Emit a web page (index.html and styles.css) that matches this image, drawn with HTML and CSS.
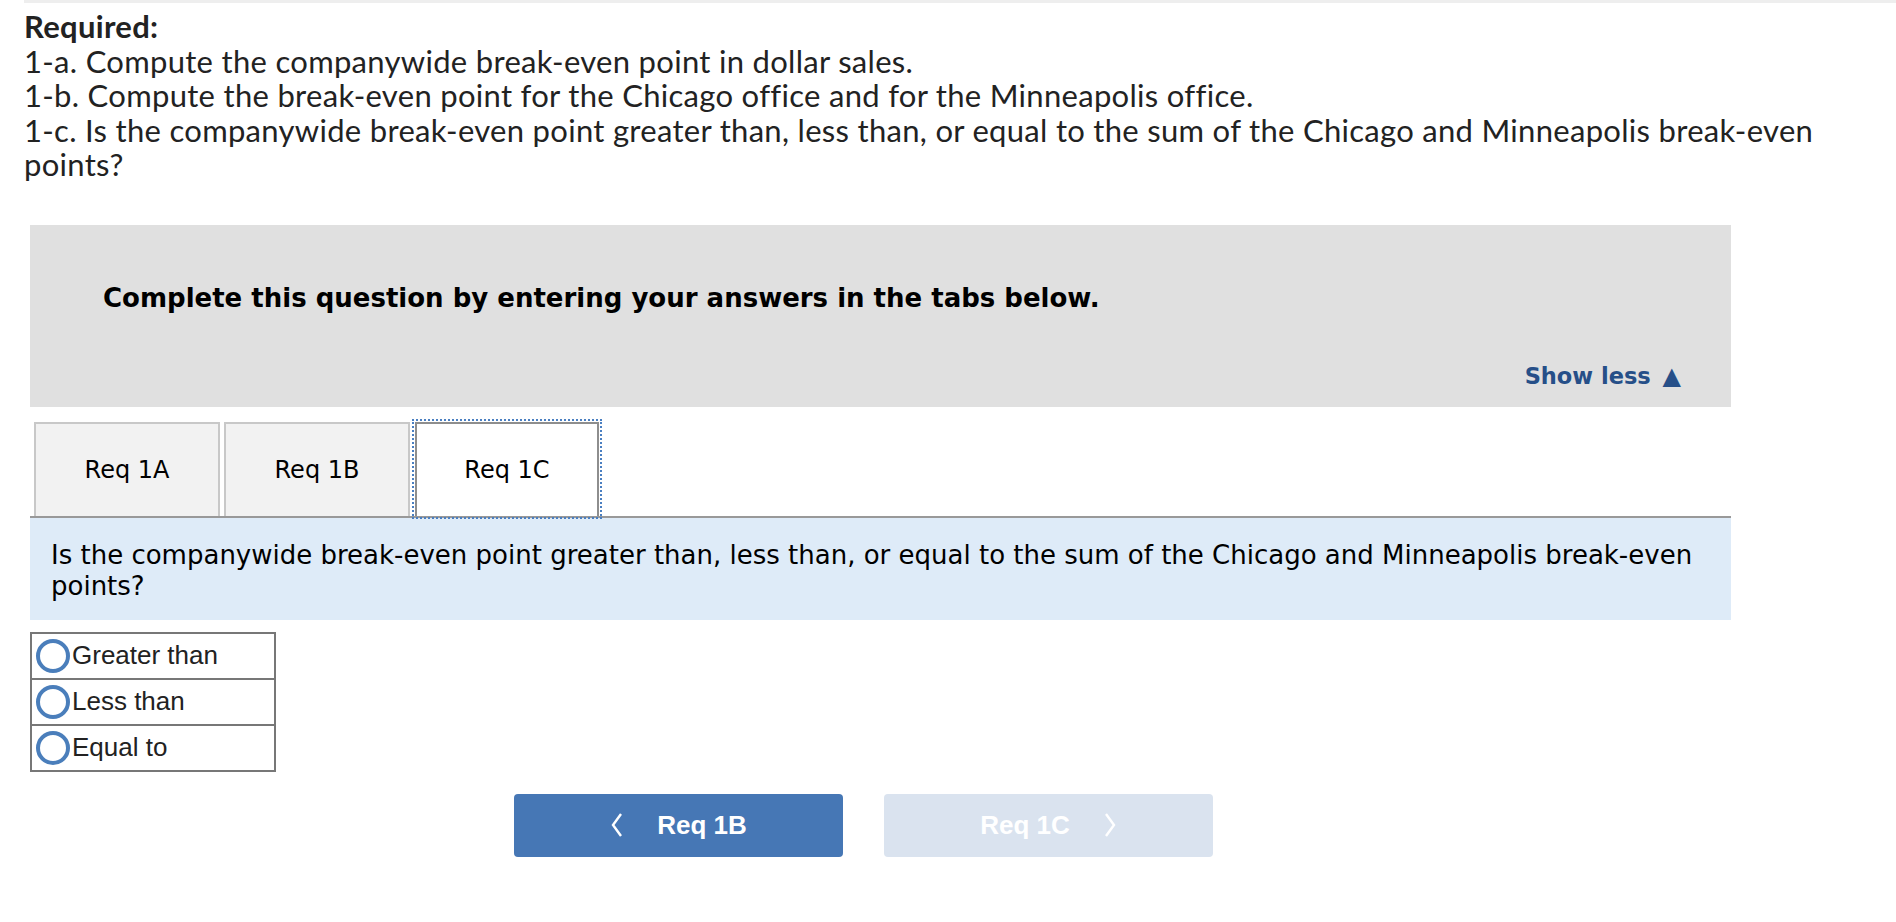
FILE: index.html
```html
<!DOCTYPE html>
<html>
<head>
<meta charset="utf-8">
<link rel="stylesheet" href="styles.css">
</head>
<body>
<div class="page">
  <div class="required">
    <div class="req-title">Required:</div>
    <div>1-a. Compute the companywide break-even point in dollar sales.</div>
    <div>1-b. Compute the break-even point for the Chicago office and for the Minneapolis office.</div>
    <div>1-c. Is the companywide break-even point greater than, less than, or equal to the sum of the Chicago and Minneapolis break-even points?</div>
  </div>

  <div class="panel">
    <div class="instructions">
      <div class="instr-text">Complete this question by entering your answers in the tabs below.</div>
      <div class="show-less">Show less <span class="tri">&#9650;</span></div>
    </div>

    <div class="tabs">
      <div class="tab">Req 1A</div>
      <div class="tab">Req 1B</div>
      <div class="tab active">Req 1C</div>
    </div>

    <div class="question">Is the companywide break-even point greater than, less than, or equal to the sum of the Chicago and Minneapolis break-even points?</div>

    <div class="options">
      <div class="option"><span class="radio"></span><span>Greater than</span></div>
      <div class="option"><span class="radio"></span><span>Less than</span></div>
      <div class="option"><span class="radio"></span><span>Equal to</span></div>
    </div>

    <div class="nav">
      <div class="btn prev"><span class="chev">
        <svg width="14" height="26" viewBox="0 0 14 26"><path d="M11 2 L3 13 L11 24" fill="none" stroke="#fff" stroke-width="2.4"/></svg>
      </span><span>Req 1B</span></div>
      <div class="btn next"><span>Req 1C</span><span class="chev">
        <svg width="14" height="26" viewBox="0 0 14 26"><path d="M3 2 L11 13 L3 24" fill="none" stroke="#fff" stroke-width="2.4"/></svg>
      </span></div>
    </div>
  </div>
</div>
</body>
</html>
```

FILE: styles.css
```css
html, body {
  margin: 0;
  padding: 0;
  background: #fff;
}

.page {
  border-top: 3px solid #eeeeee;
  margin-left: 24px;
  padding-top: 6px;
}

.required {
  font-family: "Lato", "Liberation Sans", sans-serif;
  font-size: 31px;
  line-height: 34.5px;
  color: #222;
  letter-spacing: 0.3px;
  padding-right: 20px;
}

.req-title {
  font-weight: bold;
}

.panel {
  margin-left: 6px;
  width: 1701px;
  margin-top: 43px;
}

.instructions {
  background: #e0e0e0;
  height: 182px;
  display: flex;
  flex-direction: column;
  font-family: "DejaVu Sans", Verdana, sans-serif;
}

.instr-text {
  font-weight: bold;
  font-size: 26px;
  color: #000;
  padding: 58px 0 0 73px;
}

.show-less {
  margin-top: auto;
  align-self: flex-end;
  padding: 0 50px 17px 0;
  font-size: 22.5px;
  font-weight: bold;
  color: #264f88;
}

.tri {
  font-size: 24px;
  margin-left: 4px;
}

.tabs {
  display: flex;
  padding: 15px 0 0 4px;
  border-bottom: 2px solid #999;
  gap: 4px;
}

.tab {
  width: 186px;
  height: 94px;
  box-sizing: border-box;
  background: #f2f2f2;
  border: 2px solid #c8c8c8;
  border-bottom: none;
  display: flex;
  align-items: center;
  justify-content: center;
  font-family: "DejaVu Sans", Verdana, sans-serif;
  font-size: 24px;
  color: #000;
}

.tab.active {
  background: #fff;
  border-color: #8e8e8e;
  width: 184px;
  outline: 2px dotted #4a7fc1;
  outline-offset: 1px;
  margin-left: 1px;
}

.question {
  background: #deebf8;
  font-family: "DejaVu Sans", Verdana, sans-serif;
  font-size: 26px;
  line-height: 31px;
  color: #000;
  padding: 22px 30px 18px 21px;
}

.options {
  margin-top: 12px;
  width: 242px;
  border: 2px solid #777;
  font-family: "Liberation Sans", Arial, sans-serif;
  font-size: 26px;
  color: #222;
}

.option {
  height: 44px;
  display: flex;
  align-items: center;
  gap: 2px;
  padding-left: 4px;
}

.option + .option {
  border-top: 2px solid #777;
}

.radio {
  width: 26px;
  height: 26px;
  border: 4px solid #4a7ebb;
  border-radius: 50%;
  flex: none;
}

.nav {
  display: flex;
  gap: 41px;
  padding-left: 484px;
  margin-top: 22px;
}

.btn {
  width: 329px;
  height: 63px;
  border-radius: 4px;
  display: flex;
  align-items: center;
  justify-content: center;
  gap: 33px;
  font-family: "Liberation Sans", Arial, sans-serif;
  font-weight: bold;
  font-size: 26px;
  color: #fff;
}

.btn.prev {
  background: #4677b5;
}

.btn.next {
  background: #dae3ef;
}

.chev {
  display: flex;
}
```
